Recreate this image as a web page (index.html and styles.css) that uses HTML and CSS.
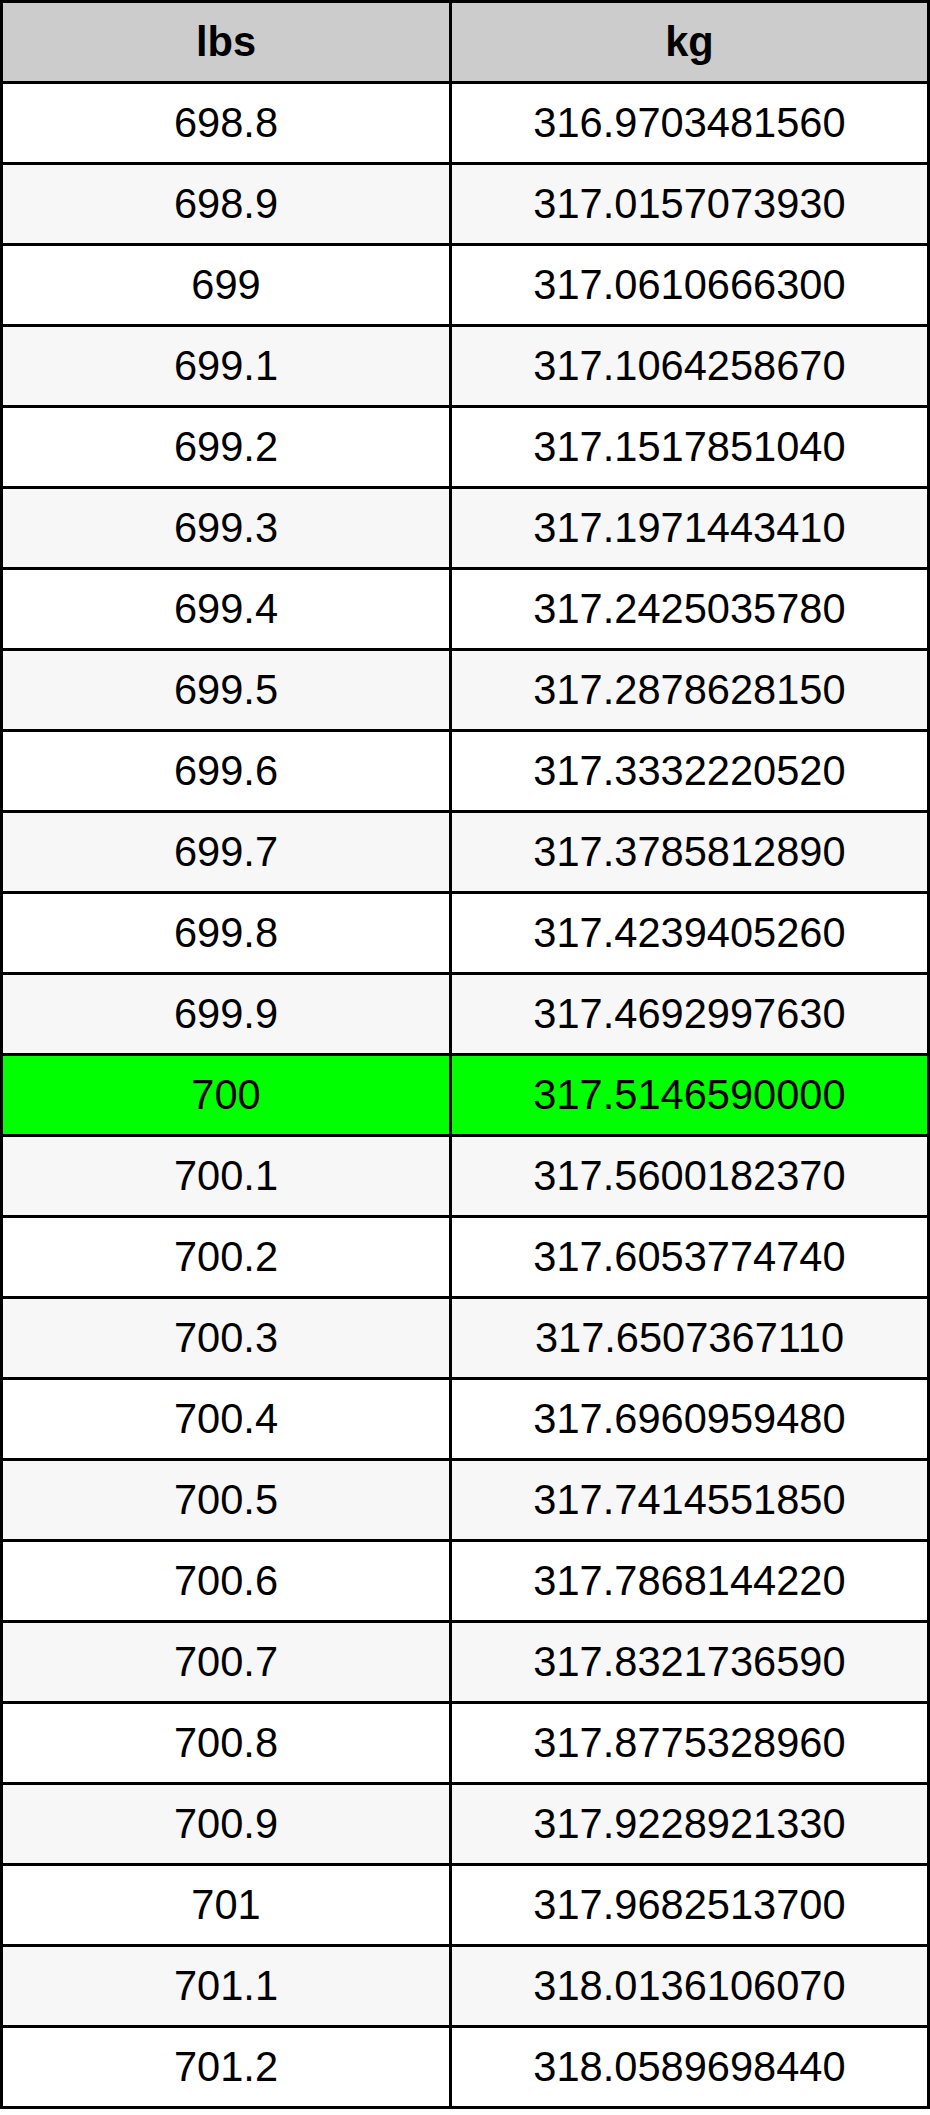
FILE: index.html
```html
<!DOCTYPE html>
<html>
<head>
<meta charset="utf-8">
<title>lbs to kg</title>
<link rel="stylesheet" href="styles.css">
</head>
<body>
<table class="conv">
<thead>
<tr><th class="c1">lbs</th><th class="c2">kg</th></tr>
</thead>
<tbody>
<tr><td>698.8</td><td>316.9703481560</td></tr>
<tr><td>698.9</td><td>317.0157073930</td></tr>
<tr><td>699</td><td>317.0610666300</td></tr>
<tr><td>699.1</td><td>317.1064258670</td></tr>
<tr><td>699.2</td><td>317.1517851040</td></tr>
<tr><td>699.3</td><td>317.1971443410</td></tr>
<tr><td>699.4</td><td>317.2425035780</td></tr>
<tr><td>699.5</td><td>317.2878628150</td></tr>
<tr><td>699.6</td><td>317.3332220520</td></tr>
<tr><td>699.7</td><td>317.3785812890</td></tr>
<tr><td>699.8</td><td>317.4239405260</td></tr>
<tr><td>699.9</td><td>317.4692997630</td></tr>
<tr class="hl"><td>700</td><td>317.5146590000</td></tr>
<tr><td>700.1</td><td>317.5600182370</td></tr>
<tr><td>700.2</td><td>317.6053774740</td></tr>
<tr><td>700.3</td><td>317.6507367110</td></tr>
<tr><td>700.4</td><td>317.6960959480</td></tr>
<tr><td>700.5</td><td>317.7414551850</td></tr>
<tr><td>700.6</td><td>317.7868144220</td></tr>
<tr><td>700.7</td><td>317.8321736590</td></tr>
<tr><td>700.8</td><td>317.8775328960</td></tr>
<tr><td>700.9</td><td>317.9228921330</td></tr>
<tr><td>701</td><td>317.9682513700</td></tr>
<tr><td>701.1</td><td>318.0136106070</td></tr>
<tr><td>701.2</td><td>318.0589698440</td></tr>
</tbody>
</table>
</body>
</html>
```

FILE: styles.css
```css
html, body {
  margin: 0;
  padding: 0;
  background: #ffffff;
}

.conv {
  border-collapse: separate;
  border-spacing: 3px;
  background: #000000;
  table-layout: fixed;
  width: 930px;
  font-family: "Liberation Sans", Arial, sans-serif;
  font-size: 41.6px;
  color: #000000;
}

.conv th,
.conv td {
  height: 78px;
  padding: 0;
  text-align: center;
  vertical-align: middle;
  line-height: 1;
}

.conv .c1 { width: 446px; }
.conv .c2 { width: 475px; }

.conv th {
  background: #cccccc;
  font-weight: bold;
}

.conv tbody tr:nth-child(odd) td { background: #ffffff; }
.conv tbody tr:nth-child(even) td { background: #f7f7f7; }
.conv tbody tr.hl td { background: #00ff00; }
```
